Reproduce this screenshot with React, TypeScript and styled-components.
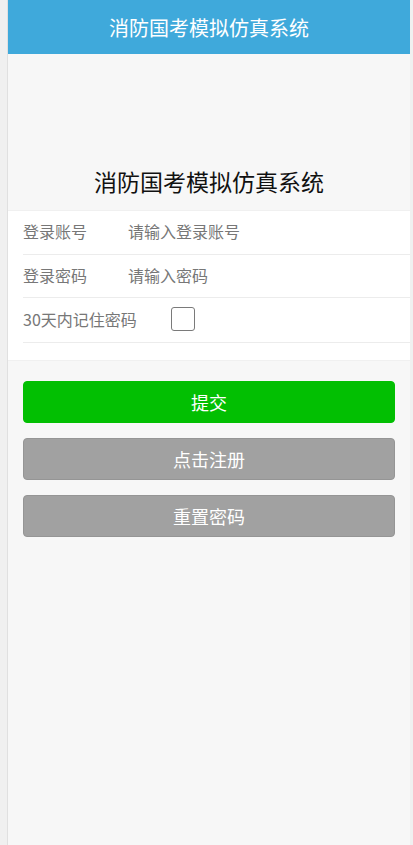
import React, { useState } from "react";
import styled, { createGlobalStyle } from "styled-components";

const GlobalStyle = createGlobalStyle`
  html, body {
    margin: 0;
    padding: 0;
    background: #f0f0f0;
    font-family: "Noto Sans CJK SC", "Noto Sans", sans-serif;
  }
  * { box-sizing: border-box; }
`;

const Shell = styled.div`
  margin: 0 3px 0 7px;
  min-height: 845px;
  border-left: 1px solid #e0e0e0;
  background: #f7f7f7;
`;

const Header = styled.header`
  height: 54px;
  background: #3fa9db;
  color: #fff;
  font-size: 20px;
  display: flex;
  align-items: center;
  justify-content: center;
`;

const Title = styled.h1`
  margin: 107px 0 9px;
  height: 40px;
  line-height: 40px;
  text-align: center;
  font-size: 23px;
  font-weight: 400;
  color: #111;
`;

const Panel = styled.div`
  background: #fff;
  border-top: 1px solid #f0f0f0;
  border-bottom: 1px solid #f0f0f0;
  padding-bottom: 17px;
`;

const Row = styled.div<{ $h: number }>`
  margin-left: 15px;
  height: ${(p) => p.$h}px;
  padding-bottom: 3px;
  display: flex;
  align-items: center;
  border-bottom: 1px solid #ececec;
`;

const Label = styled.label<{ $w?: number }>`
  width: ${(p) => (p.$w ? `${p.$w}px` : "auto")};
  flex-shrink: 0;
  font-size: 16px;
  color: #777;
`;

const Input = styled.input`
  flex: 1;
  min-width: 0;
  border: none;
  outline: none;
  padding: 0;
  font-family: inherit;
  font-size: 16px;
  color: #333;
  background: transparent;
  &::placeholder {
    color: #777;
  }
`;

const Check = styled.span<{ $on: boolean }>`
  margin-left: 34px;
  width: 24px;
  height: 24px;
  border: 1px solid #7a7a7a;
  border-radius: 3px;
  background: ${(p) => (p.$on ? "#04be02" : "#fff")};
  cursor: pointer;
`;

const Actions = styled.div`
  padding: 20px 15px 0;
  display: flex;
  flex-direction: column;
  gap: 15px;
`;

const Btn = styled.button<{ $tone: "green" | "gray" }>`
  height: 42px;
  border-radius: 4px;
  border: 1px solid ${(p) => (p.$tone === "green" ? "#02bf02" : "#959595")};
  background: ${(p) => (p.$tone === "green" ? "#02bf02" : "#a1a1a1")};
  color: #fff;
  font-family: inherit;
  font-size: 18px;
  cursor: pointer;
`;

export default function App() {
  const [remember, setRemember] = useState(false);
  return (
    <>
      <GlobalStyle />
      <Shell>
        <Header>消防国考模拟仿真系统</Header>
        <Title>消防国考模拟仿真系统</Title>
        <Panel>
          <Row $h={44}>
            <Label $w={105}>登录账号</Label>
            <Input placeholder="请输入登录账号" />
          </Row>
          <Row $h={43}>
            <Label $w={105}>登录密码</Label>
            <Input type="password" placeholder="请输入密码" />
          </Row>
          <Row $h={45}>
            <Label>30天内记住密码</Label>
            <Check $on={remember} onClick={() => setRemember(!remember)} />
          </Row>
        </Panel>
        <Actions>
          <Btn $tone="green">提交</Btn>
          <Btn $tone="gray">点击注册</Btn>
          <Btn $tone="gray">重置密码</Btn>
        </Actions>
      </Shell>
    </>
  );
}
